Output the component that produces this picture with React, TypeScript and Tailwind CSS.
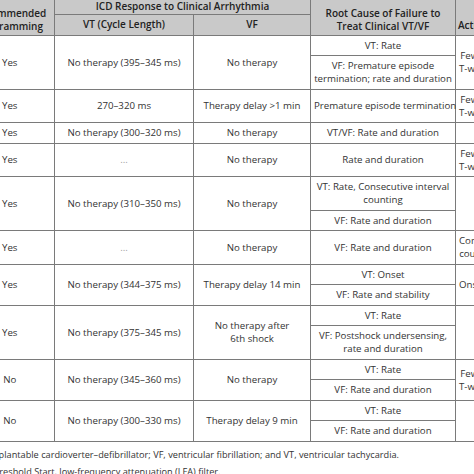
import React from 'react';

interface Row {
  rec: string;
  vt: string;
  vf: string[];
  causes: string[][];
  action: string[];
}

const rows: Row[] = [
  {
    rec: 'Yes',
    vt: 'No therapy (395–345 ms)',
    vf: ['No therapy'],
    causes: [['VT: Rate'], ['VF: Premature episode', 'termination; rate and duration']],
    action: ['Fewer NID for VT/VF', 'T-wave filter turned on'],
  },
  {
    rec: 'Yes',
    vt: '270–320 ms',
    vf: ['Therapy delay >1 min'],
    causes: [['Premature episode termination']],
    action: ['Fewer NID for VT/VF', 'T-wave filter turned on'],
  },
  {
    rec: 'Yes',
    vt: 'No therapy (300–320 ms)',
    vf: ['No therapy'],
    causes: [['VT/VF: Rate and duration']],
    action: [],
  },
  {
    rec: 'Yes',
    vt: '…',
    vf: ['No therapy'],
    causes: [['Rate and duration']],
    action: ['Fewer NID for VT/VF', 'T-wave filter turned on'],
  },
  {
    rec: 'Yes',
    vt: 'No therapy (310–350 ms)',
    vf: ['No therapy'],
    causes: [['VT: Rate, Consecutive interval', 'counting'], ['VF: Rate and duration']],
    action: [],
  },
  {
    rec: 'Yes',
    vt: '…',
    vf: ['No therapy'],
    causes: [['VF: Rate and duration']],
    action: ['Consecutive intervals', 'counting turned OFF'],
  },
  {
    rec: 'Yes',
    vt: 'No therapy (344–375 ms)',
    vf: ['Therapy delay 14 min'],
    causes: [['VT: Onset'], ['VF: Rate and stability']],
    action: ['Onset programmed off'],
  },
  {
    rec: 'Yes',
    vt: 'No therapy (375–345 ms)',
    vf: ['No therapy after', '6th shock'],
    causes: [['VT: Rate'], ['VF: Postshock undersensing,', 'rate and duration']],
    action: [],
  },
  {
    rec: 'No',
    vt: 'No therapy (345–360 ms)',
    vf: ['No therapy'],
    causes: [['VT: Rate'], ['VF: Rate and duration']],
    action: ['Fewer NID for VT/VF', 'T-wave filter turned on'],
  },
  {
    rec: 'No',
    vt: 'No therapy (300–330 ms)',
    vf: ['Therapy delay 9 min'],
    causes: [['VT: Rate'], ['VF: Rate and duration']],
    action: [],
  },
];

const Lines: React.FC<{ lines: string[] }> = ({ lines }) => (
  <>
    {lines.map((l, i) => (
      <React.Fragment key={i}>
        {i > 0 && <br />}
        {l}
      </React.Fragment>
    ))}
  </>
);

const cell = 'border border-[#7a7a7a] px-[3px] py-[3.25px] text-center align-middle whitespace-nowrap';
const head = 'border border-[#7a7a7a] px-[3px] text-center font-semibold text-[#222] text-[10px] whitespace-nowrap';

export default function App() {
  return (
    <div
      className="w-[474px] h-[474px] overflow-hidden bg-white text-[#333]"
      style={{ fontFamily: '"Open Sans", "Noto Sans", sans-serif' }}
    >
      <div className="ml-[-35px] w-[590px]">
        <table className="table-fixed border-collapse w-[590px] text-[9.7px] leading-[13px]">
          <colgroup>
            <col className="w-[89px]" />
            <col className="w-[139px]" />
            <col className="w-[117px]" />
            <col className="w-[145px]" />
            <col className="w-[100px]" />
          </colgroup>
          <thead className="bg-[#c9c9c9]">
            <tr className="h-[14px]">
              <th rowSpan={2} className={`${head} align-middle border-t-0 pt-[6px]`}>
                Recommended
                <br />
                Programming
              </th>
              <th colSpan={2} className={`${head} align-middle border-t-0 py-0`}>
                ICD Response to Clinical Arrhythmia
              </th>
              <th rowSpan={2} className={`${head} align-middle border-t-0 pt-[6px]`}>
                Root Cause of Failure to
                <br />
                Treat Clinical VT/VF
              </th>
              <th rowSpan={2} className={`${head} border-t-0 align-bottom text-left pl-[2px] pb-[3px]`}>
                Actions Taken
              </th>
            </tr>
            <tr className="h-[21px]">
              <th className={`${head} align-middle`}>VT (Cycle Length)</th>
              <th className={`${head} align-middle`}>VF</th>
            </tr>
          </thead>
          <tbody>
            {rows.map((r, ri) =>
              r.causes.map((c, ci) => (
                <tr key={`${ri}-${ci}`}>
                  {ci === 0 && (
                    <>
                      <td rowSpan={r.causes.length} className={`${cell} border-l-0`}>
                        {r.rec}
                      </td>
                      <td
                        rowSpan={r.causes.length}
                        className={`${cell} ${r.vt === '…' ? 'text-[#a0a0a0]' : ''}`}
                      >
                        {r.vt}
                      </td>
                      <td rowSpan={r.causes.length} className={cell}>
                        <Lines lines={r.vf} />
                      </td>
                    </>
                  )}
                  <td className={cell}>
                    <Lines lines={c} />
                  </td>
                  {ci === 0 && (
                    <td rowSpan={r.causes.length} className={cell}>
                      <Lines lines={r.action} />
                    </td>
                  )}
                </tr>
              ))
            )}
          </tbody>
        </table>
        <div className="pt-[4px] pl-[3px] text-[9.2px] leading-[17px] text-[#333] whitespace-nowrap">
          <p>
            ICD, implantable cardioverter–defibrillator; VF, ventricular fibrillation; and VT, ventricular
            tachycardia.
          </p>
          <p>ATS, Threshold Start, low-frequency attenuation (LFA) filter.</p>
        </div>
      </div>
    </div>
  );
}
